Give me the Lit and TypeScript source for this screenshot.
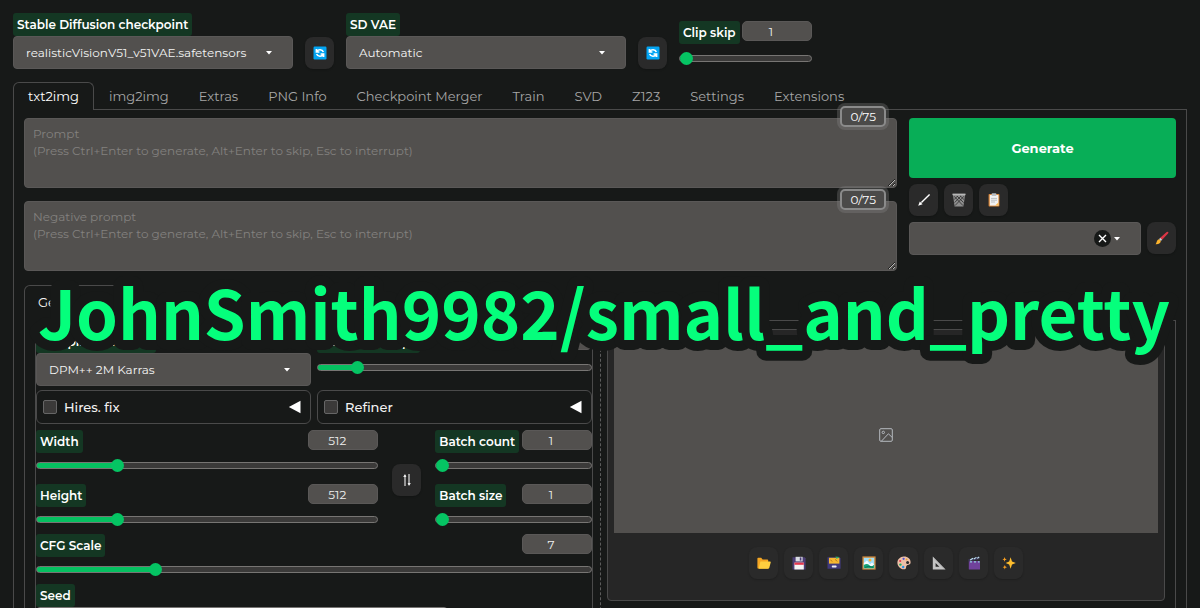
import { LitElement, html, svg, css, nothing } from "lit";
import { customElement, property } from "lit/decorators.js";

const icons: Record<string, unknown> = {
  refresh: svg`<rect x="0.5" y="0.5" width="13" height="13" rx="1.2" fill="#03a4f2"/>
    <path d="M3.4 3V6H6.4M3.8 5.6C5 3.2 9.2 3 10.4 6M10.6 11V8H7.6M10.2 8.4C9 10.8 4.8 11 3.6 8" fill="none" stroke="#fff" stroke-width="1.6"/>`,
  arrow: svg`<path d="M12.6 1.4L4.4 9.6" stroke="#fff" stroke-width="1.4"/><path d="M1.2 12.8L2.8 8.4L5.6 11.2Z" fill="#fff"/>`,
  trash: svg`<path d="M0.8 1H13.2L11.4 13.4H2.6Z" fill="#8f8f8f"/><path d="M0.5 0.6H13.5V2.2H0.5Z" fill="#b8b8b8"/>
    <path d="M2 3.2L11 12.6M5 3L11.6 9.6M8.4 3L12 6.6M12 3.2L3 12.6M9 3L2.6 9.6M5.6 3L2.2 6.6" stroke="#2c2c2c" stroke-width="0.8"/>`,
  clipboard: svg`<rect x="1.6" y="1" width="10.8" height="12.6" rx="0.8" fill="#d9873a"/><rect x="2.8" y="2" width="8.6" height="10.6" fill="#f2f2f2"/>
    <rect x="4.6" y="0.2" width="4.8" height="2.8" rx="0.8" fill="#b9bec4"/><path d="M4 5.4H10M4 7.2H10M4 9H8" stroke="#a5aab0" stroke-width="0.7"/><path d="M11.4 9.4V12.6H8.2Z" fill="#ffb94a"/>`,
  brush: svg`<path d="M12.6 0.8C13.6 1 13.6 2 13 2.6L7.2 8.8L5.2 6.8L11.4 1.2Z" fill="#dc3545"/><path d="M5.2 6.8L7.2 8.8L5.8 10L4 8.2Z" fill="#c9ced6"/>
    <path d="M4 8.2L5.8 10C5.8 12 4 13.4 0.6 13.2C1.8 12 1.6 8.8 4 8.2Z" fill="#fcb32c"/>`,
  swap: svg`<path d="M5 13V2M9 1V12" stroke="#eee" stroke-width="1.1"/><path d="M3.2 4L5 1L6.4 4ZM7.6 10L9 13L10.8 10Z" fill="#eee"/>`,
  folder: svg`<path d="M0.4 2.6Q0.4 1.8 1.2 1.8H4.2L5.6 3.4H10.4Q11.2 3.4 11.2 4.2V12.6H1.6Q0.4 12.6 0.4 11.4Z" fill="#f5a623"/>
    <path d="M3.4 5.4H13Q14 5.4 13.7 6.4L12.3 11.8Q12 12.8 11 12.8H1.6Z" fill="#ffcf3f"/>`,
  floppy: svg`<path d="M0.5 1.2H12.6L13.6 2.2V13.5H0.5Z" fill="#4b3d75"/><rect x="3.6" y="0.8" width="7" height="4.6" fill="#d9dce2"/><rect x="7.8" y="1.4" width="1.6" height="3.2" fill="#4b3d75"/>
    <rect x="2.4" y="6.6" width="9.4" height="6.9" fill="#f4f4f4"/><rect x="2.4" y="6.6" width="9.4" height="2.2" fill="#e5384f"/>`,
  card: svg`<path d="M0.5 1.2H12.6L13.6 2.6V12.8H0.5Z" fill="#403a7c"/><rect x="2" y="1.8" width="10.4" height="5.8" fill="#f7b830"/><path d="M8.4 0.4L12.4 1L9.6 3Z" fill="#2fae6a"/>
    <path d="M3.4 4L5.4 5.4M8 3.4L10.4 5.4" stroke="#b5721c" stroke-width="0.9"/><rect x="4.8" y="9.4" width="4.8" height="2.2" rx="0.8" fill="#eceef4"/>`,
  picture: svg`<rect x="0.4" y="0.4" width="13.2" height="13.2" fill="#d08a3e"/><rect x="1.8" y="1.8" width="10.4" height="10.4" fill="#9fe0fb"/>
    <circle cx="8" cy="4" r="1.5" fill="#ffb02e"/><path d="M1.8 7L5 4.4L8 8.2L10 6.4L12.2 8.6V12.2H1.8Z" fill="#f4fbff"/><path d="M1.8 9Q5 6.8 7.4 9.2T12.2 8.6V12.2H1.8Z" fill="#15a678"/><path d="M3 11.4Q6 9.6 11 11.2" stroke="#0b7358" fill="none"/>`,
  palette: svg`<path d="M6.6 0.6C10.6 0.4 13.8 3 13.6 6.6C13.5 9.2 11 8.6 9.8 9.4C8.4 10.4 10 12.2 7.8 13.2C4 14 0.4 10.6 0.4 6.8C0.4 3.4 3.2 0.8 6.6 0.6Z" fill="#edbfa7"/>
    <circle cx="10.6" cy="6.6" r="1.5" fill="#2b2b2b"/><circle cx="6.6" cy="2.8" r="1.1" fill="#4c55d8"/><circle cx="3.2" cy="5" r="1.1" fill="#e2394c"/><circle cx="3.4" cy="8.6" r="1.2" fill="#1fae66"/><circle cx="6.2" cy="11" r="1.2" fill="#2294ea"/><circle cx="9.6" cy="3.4" r="0.9" fill="#f0a02c"/>`,
  ruler: svg`<path fill-rule="evenodd" d="M0.8 0.6L13.6 13.4H0.8ZM3.6 7V10.8H7.4Z" fill="#c5c5c5"/><path d="M2.6 3.6L11.4 12.4" stroke="#8a8a8a" stroke-width="0.5" stroke-dasharray="0.6 0.9"/>`,
  clapper: svg`<rect x="1.8" y="5" width="11.2" height="8.6" rx="0.6" fill="#70429b"/><path d="M1.2 3.4L12 0.6L12.6 3L1.8 5.4Z" fill="#3f3b5c"/>
    <path d="M3.2 4L6 2.2M6.8 3L9.4 1.4M10.2 2.4L12.2 1" stroke="#bfe3ef" stroke-width="1.1"/><path d="M3 5.9H5M7 5.9H9M11 5.9H12.6" stroke="#8fd0dd" stroke-width="1.1"/>`,
  sparkles: svg`<path d="M8.6 1.2L10 5.4L13.8 7L10 8.6L8.6 12.8L7.2 8.6L3.6 7L7.2 5.4Z" fill="#ffbe2e"/>
    <path d="M2.6 1L3.2 2.8L4.8 3.4L3.2 4L2.6 5.8L2 4L0.4 3.4L2 2.8ZM2.8 9L3.4 10.6L5 11.2L3.4 11.8L2.8 13.4L2.2 11.8L0.6 11.2L2.2 10.6Z" fill="#ffa21f"/>`,
};

const shared = css`
  * { box-sizing: border-box; }
  button, input, select, textarea { font: inherit; color: inherit; margin: 0; }
  .badge {
    display: inline-block; width: max-content; height: 23px; line-height: 23px; padding: 0 4px;
    background: #143723; color: #fff; border-radius: 3px; font-size: 12px; font-weight: 600; white-space: nowrap;
  }
`;

@customElement("tool-button")
class ToolButton extends LitElement {
  @property() icon = "";
  @property() label = "";
  static styles = [shared, css`
    :host { display: block; width: 29px; height: 32px; }
    .tool {
      display: grid; place-items: center; width: 100%; height: 100%; padding: 0;
      border: 0; border-radius: 8px; background: #2a2a2a; box-shadow: 0 1px 2px #0003;
    }
    .glyph { width: 14px; height: 14px; display: block; }
  `];
  render() {
    return html`<button class="tool" type="button" aria-label=${this.label}>
      <svg class="glyph" viewBox="0 0 14 14" aria-hidden="true">${icons[this.icon]}</svg>
    </button>`;
  }
}

@customElement("drop-down")
class DropDown extends LitElement {
  @property() label = "";
  @property() value = "";
  @property({ type: Boolean }) clearable = false;
  static styles = [shared, css`
    :host { display: block; min-width: 0; }
    .stack { display: grid; }
    .field { position: relative; display: grid; }
    .select {
      appearance: none; width: 100%; height: 33px; padding: 0 36px 1px 12px; border: 1px solid #5a5857;
      border-radius: 4px; background: #52504e; color: #f4f4f4; font-size: 12px;
    }
    .caret { position: absolute; right: 21px; top: 15px; width: 6px; height: 4px; pointer-events: none; }
    .clear {
      position: absolute; right: 30px; top: 8px; width: 17px; height: 17px; padding: 0; border: 0;
      border-radius: 50%; background: #171918; display: grid; place-items: center;
    }
    .cross { width: 9px; height: 9px; }
  `];
  render() {
    return html`<div class="stack">
      ${this.clearable ? nothing : html`<label class="badge" for="s">${this.label}</label>`}
      <div class="field">
        <select class="select" id="s" aria-label=${this.label}><option>${this.value}</option></select>
        ${this.clearable ? html`<button class="clear" type="button" aria-label="Clear">
          <svg class="cross" viewBox="0 0 9 9"><path d="M1 1L8 8M8 1L1 8" stroke="#fff" stroke-width="1.4"/></svg></button>` : nothing}
        <svg class="caret" viewBox="0 0 6 4" aria-hidden="true"><path d="M0 0H6L3 3.6Z" fill="#fff"/></svg>
      </div>
    </div>`;
  }
}

@customElement("range-field")
class RangeField extends LitElement {
  @property() label = "";
  @property({ type: Number }) min = 1;
  @property({ type: Number }) max = 100;
  @property({ type: Number }) value = 1;
  @property({ type: Boolean, reflect: true }) roomy = false;
  static styles = [shared, css`
    :host { display: block; min-width: 0; }
    .head { display: flex; justify-content: space-between; align-items: flex-start; gap: 2px; }
    .number {
      appearance: textfield; width: 70px; height: 20px; padding: 0 12px 0 0; border: 1px solid #5a5857;
      border-radius: 5px; background: #52504e; color: #f0f0f0; font-size: 12px; text-align: center;
    }
    .number::-webkit-inner-spin-button, .number::-webkit-outer-spin-button { appearance: none; margin: 0; }
    .range { appearance: none; display: block; width: 100%; height: 13px; margin: 6px 0 4px; background: none; }
    :host([roomy]) .range { margin-top: 8px; }
    .range::-webkit-slider-runnable-track {
      height: 7px; border: 1px solid #777573; border-radius: 4px;
      background: linear-gradient(#05c060, #05c060) 0 / var(--fill) 100% no-repeat #3b3a39;
    }
    .range::-webkit-slider-thumb {
      appearance: none; width: 13px; height: 13px; margin-top: -4px; border-radius: 50%; background: #05c463;
    }
  `];
  render() {
    const fill = ((this.value - this.min) / (this.max - this.min)) * 100;
    return html`<div class="head">
        <label class="badge" for="n">${this.label}</label>
        <input class="number" id="n" type="number" .value=${String(this.value)}>
      </div>
      <input class="range" type="range" aria-label=${this.label} min=${this.min} max=${this.max}
        .value=${String(this.value)} style="--fill:${fill}%">`;
  }
}

@customElement("app-root")
class AppRoot extends LitElement {
  static styles = [shared, css`
    :host {
      display: block; position: relative; height: 100vh; overflow: hidden; background: #171918; color: #f2f2f2;
      font-family: Montserrat, Inter, "Open Sans", sans-serif; font-size: 13px;
    }
    .page { padding: 13px 13px 0; }
    .quick { display: flex; align-items: flex-end; gap: 12px; }
    .quick drop-down { flex: 0 1 280px; }
    .quick range-field { flex: 0 1 133px; }
    .tabs { display: flex; position: relative; z-index: 1; }
    .tab {
      height: 28px; padding: 0 14px; border: 1px solid transparent; border-bottom: 0; background: none;
      color: #a6a6a6; font-size: 13px; white-space: nowrap;
    }
    .tab.on { color: #fff; border-color: #4a4a4a; border-radius: 6px 6px 0 0; background: #171918; }
    .main-tabs { margin-top: 13px; }
    .main-tabs .tab { margin-bottom: -1px; padding-bottom: 2px; }
    .panel { border: 1px solid #4a4a4a; padding: 8px 10px 0; }
    .top { display: grid; grid-template-columns: minmax(0, 1fr) 267px; gap: 12px; }
    .prompts { display: grid; gap: 13px; align-content: start; }
    .prompt { position: relative; display: grid; }
    .area {
      height: 70px; padding: 6px 8px; border: 1px solid #5a5857; border-radius: 4px; background: #52504e;
      font-size: 12px; line-height: 17px; resize: vertical; display: block; width: 100%;
    }
    .area::placeholder { color: #83817f; }
    .count {
      position: absolute; right: 11px; top: -12px; height: 21px; line-height: 17px; padding: 0 8px; border: 2px solid #8a8a8a;
      border-radius: 5px; background: #4b4a49; box-shadow: 0 0 0 3px #8a8a8a4d; font-size: 12px; color: #fff;
    }
    .actions { display: grid; gap: 6px; align-content: start; }
    .generate {
      height: 60px; border: 0; border-radius: 4px; background: #08ae57; color: #fff; font-size: 13px; font-weight: 700;
    }
    .row { display: flex; gap: 6px; }
    .row .grow { flex: 1; }
    .sub-tabs { margin-top: 14px; }
    .sub-tabs .tab { height: 36px; margin-bottom: -1px; padding: 0 13px 3px; color: #f2f2f2; }
    .work { display: grid; grid-template-columns: minmax(0, 1fr) 14px minmax(0, 1fr); }
    .work-panel { padding: 8px 10px 0; }
    .settings { border: 1px solid #4a4a4a; border-bottom: 0; display: grid; gap: 4px; align-content: start; }
    .pair { display: grid; grid-template-columns: minmax(0, 1fr) minmax(0, 1fr); gap: 6px; }
    .fold {
      display: flex; align-items: center; gap: 7px; height: 34px; padding: 0 9px 0 6px;
      border: 1px solid #4a4a4a; border-radius: 6px;
    }
    .tick { appearance: none; width: 14px; height: 14px; border: 1px solid #666; border-radius: 2px; background: #3b3a39; }
    .fold-name { flex: 1; font-size: 13px; font-weight: 500; }
    .open { width: 13px; height: 14px; padding: 0; border: 0; background: none; }
    .size { display: grid; grid-template-columns: minmax(0, 343fr) 29px minmax(0, 157fr); gap: 14px; align-items: center; margin-top: 2px; }
    .col { display: grid; gap: 8px; }
    .seed { display: grid; }
    .seed-input { width: 412px; max-width: 75%; height: 33px; border: 1px solid #777573; border-radius: 4px; background: #52504e; padding: 0 13px; }
    .handle { width: 0; margin: 0 auto; border-left: 1px dashed #5c5c5c; }
    .gallery { align-self: start; border: 1px solid #4a4a4a; border-radius: 4px; background: #262626; padding: 6px 6px 21px; }
    .preview { display: grid; place-items: center; height: 197px; background: #52504e; }
    .blank { width: 14px; height: 14px; }
    .tools { display: flex; justify-content: center; gap: 6px; margin-top: 14px; }
    .title { position: absolute; z-index: 2; left: 0; top: 270px; width: 100%; height: 110px; overflow: visible; pointer-events: none; }
    .title-text {
      font-family: "Noto Sans CJK JP", sans-serif; font-weight: 700; font-size: 67px; fill: #05ff7c;
      stroke: #171918; stroke-width: 20px; stroke-linejoin: round; paint-order: stroke;
    }
  `];

  private prompt(name: string) {
    return html`<div class="prompt">
      <textarea class="area" aria-label=${name}
        placeholder=${`${name}\n(Press Ctrl+Enter to generate, Alt+Enter to skip, Esc to interrupt)`}></textarea>
      <span class="count">0/75</span>
    </div>`;
  }

  private fold(id: string, name: string) {
    return html`<div class="fold">
      <input class="tick" type="checkbox" id=${id}>
      <label class="fold-name" for=${id}>${name}</label>
      <button class="open" type="button" aria-label="Expand ${name}">
        <svg width="13" height="14" viewBox="0 0 13 14"><path d="M12.5 0.8V13.2L0.8 7Z" fill="#fff"/></svg>
      </button>
    </div>`;
  }

  render() {
    const tabs = ["txt2img", "img2img", "Extras", "PNG Info", "Checkpoint Merger", "Train", "SVD", "Z123", "Settings", "Extensions"];
    const subTabs = ["Generation", "Textual Inversion", "Hypernetworks", "Checkpoints", "Lora"];
    const tools = [
      ["folder", "Open images output directory"], ["floppy", "Save image"], ["card", "Save zip"], ["picture", "Send to img2img"],
      ["palette", "Send to inpaint"], ["ruler", "Send to extras"], ["clapper", "Send to video"], ["sparkles", "Upscale"],
    ];
    return html`
      <div class="page">
        <div class="quick">
          <drop-down label="Stable Diffusion checkpoint" value="realisticVisionV51_v51VAE.safetensors"></drop-down>
          <tool-button icon="refresh" label="Refresh checkpoints"></tool-button>
          <drop-down label="SD VAE" value="Automatic"></drop-down>
          <tool-button icon="refresh" label="Refresh VAE"></tool-button>
          <range-field roomy label="Clip skip" min="1" max="12" value="1"></range-field>
        </div>
        <div class="tabs main-tabs" role="tablist">
          ${tabs.map((t, i) => html`<button class="tab ${i === 0 ? "on" : ""}" role="tab" type="button">${t}</button>`)}
        </div>
        <main class="panel">
          <div class="top">
            <div class="prompts">${this.prompt("Prompt")}${this.prompt("Negative prompt")}</div>
            <div class="actions">
              <button class="generate" type="button">Generate</button>
              <div class="row">
                <tool-button icon="arrow" label="Read generation parameters"></tool-button>
                <tool-button icon="trash" label="Clear prompt"></tool-button>
                <tool-button icon="clipboard" label="Apply styles"></tool-button>
              </div>
              <div class="row">
                <drop-down class="grow" clearable label="Styles"></drop-down>
                <tool-button icon="brush" label="Edit styles"></tool-button>
              </div>
            </div>
          </div>
          <div class="tabs sub-tabs" role="tablist">
            ${subTabs.map((t, i) => html`<button class="tab ${i === 0 ? "on" : ""}" role="tab" type="button">${t}</button>`)}
          </div>
          <div class="panel work-panel">
            <div class="work">
              <section class="settings">
                <div class="pair">
                  <drop-down label="Sampling method" value="DPM++ 2M Karras"></drop-down>
                  <range-field roomy label="Sampling steps" min="1" max="150" value="20"></range-field>
                </div>
                <div class="pair">${this.fold("hires", "Hires. fix")}${this.fold("refiner", "Refiner")}</div>
                <div class="size">
                  <div class="col">
                    <range-field label="Width" min="64" max="2048" value="512"></range-field>
                    <range-field label="Height" min="64" max="2048" value="512"></range-field>
                  </div>
                  <tool-button icon="swap" label="Switch width and height"></tool-button>
                  <div class="col">
                    <range-field label="Batch count" min="1" max="100" value="1"></range-field>
                    <range-field label="Batch size" min="1" max="8" value="1"></range-field>
                  </div>
                </div>
                <range-field label="CFG Scale" min="1" max="30" value="7"></range-field>
                <div class="seed">
                  <label class="badge" for="seed">Seed</label>
                  <input class="seed-input" id="seed" type="number" value="-1">
                </div>
              </section>
              <div class="handle"></div>
              <section class="gallery">
                <div class="preview">
                  <svg class="blank" viewBox="0 0 14 14" fill="none" stroke="#b5b9bf" stroke-width="1">
                    <rect x="0.7" y="0.7" width="12.6" height="12.6" rx="1.2"/><circle cx="4.3" cy="4.4" r="1.2"/><path d="M2.4 13.2L9.4 5.8L13.2 9.4"/>
                  </svg>
                </div>
                <div class="tools">${tools.map(([i, l]) => html`<tool-button icon=${i} label=${l}></tool-button>`)}</div>
              </section>
            </div>
          </div>
        </main>
      </div>
      <svg class="title" role="img" aria-label="JohnSmith9982/small_and_pretty">
        <text class="title-text" x="38" y="70">JohnSmith9982/small_and_pretty</text>
      </svg>`;
  }
}
